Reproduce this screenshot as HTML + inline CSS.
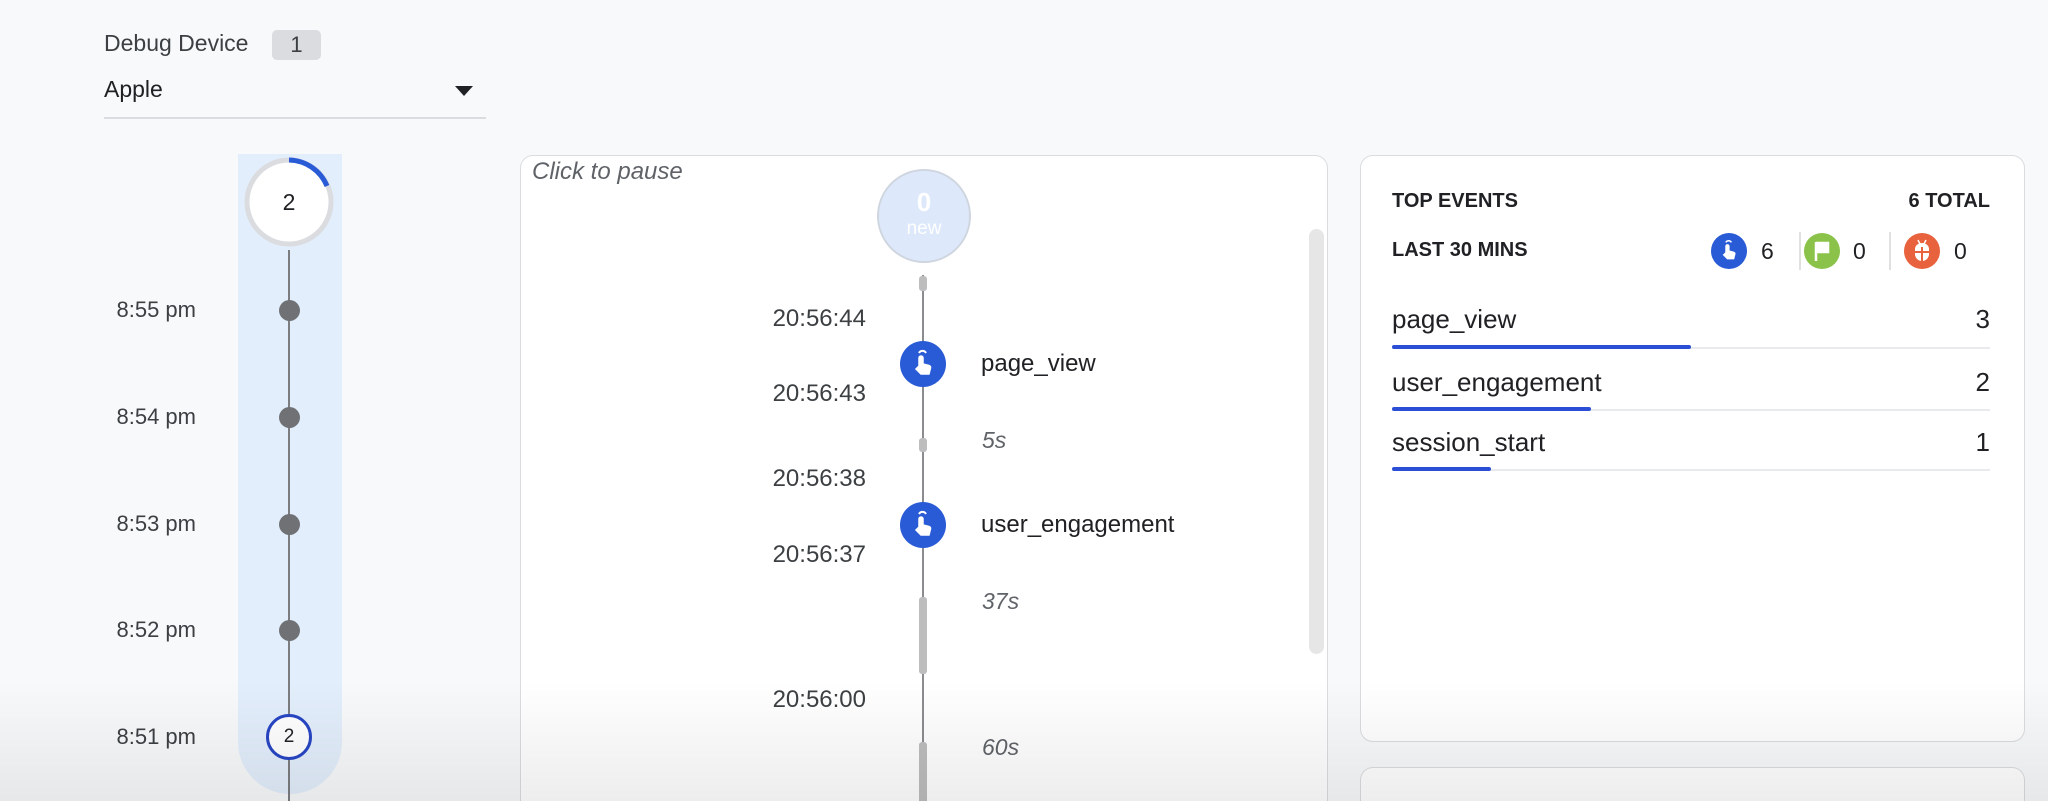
<!DOCTYPE html>
<html><head><meta charset="utf-8"><style>
*{margin:0;padding:0;box-sizing:border-box}
html,body{width:2048px;height:801px;overflow:hidden}
body{background:#f8f9fa;font-family:"Liberation Sans",Arial,sans-serif;color:#202124}
#w{position:relative;width:2048px;height:801px;overflow:hidden}
.a{position:absolute;white-space:nowrap}
.card{position:absolute;background:#fff;border:1.5px solid #dadce0;border-radius:13px}
.t{font-size:22px;color:#3c4043;text-align:right;width:120px}
.ts{font-size:24px;color:#3c4043;text-align:right;width:140px}
.it{font-size:23px;font-style:italic;color:#5f6368}
.ev{font-size:24px;color:#202124}
.dot{position:absolute;width:21px;height:21px;border-radius:50%;background:#6f7175}
.seg{position:absolute;width:8px;background:#bdbdbd;border-radius:3px;left:919px}
.row{position:absolute;left:1392px;width:598px;font-size:26px}
.row .n{position:absolute;right:0}
.row .bl{position:absolute;left:0;height:4px;background:#2a4fd6;border-radius:2px}
.row .gl{position:absolute;left:0;right:0;height:2px;background:#e8eaed}
</style></head><body><div id="w">
<div class="a" style="left:104px;top:30px;font-size:23px;color:#3c4043">Debug Device</div>
<div class="a" style="left:272px;top:30px;width:49px;height:30px;background:#dadce0;border-radius:5px;font-size:22px;text-align:center;line-height:30px;color:#3c4043">1</div>
<div class="a" style="left:104px;top:76px;font-size:23px;color:#202124">Apple</div>
<div class="a" style="left:455px;top:86px;width:0;height:0;border-left:9px solid transparent;border-right:9px solid transparent;border-top:10px solid #202124"></div>
<div class="a" style="left:104px;top:117px;width:382px;height:2px;background:#dadce0"></div>

<div class="a" style="left:238px;top:154px;width:104px;height:640px;background:#e3eefc;border-radius:0 0 52px 52px"></div>
<div class="a" style="left:288px;top:250px;width:2px;height:551px;background:#7b7d80"></div>
<svg class="a" style="left:243px;top:156px" width="92" height="92" viewBox="0 0 92 92">
<circle cx="46" cy="46" r="42" fill="#fff" stroke="#dadce0" stroke-width="5"/>
<path d="M46 4 A42 42 0 0 1 84 30" fill="none" stroke="#2a5bd7" stroke-width="5"/>
<text x="46" y="54" text-anchor="middle" font-family="Liberation Sans" font-size="23" fill="#202124">2</text></svg>
<div class="dot" style="left:279px;top:300px"></div>
<div class="dot" style="left:279px;top:407px"></div>
<div class="dot" style="left:279px;top:514px"></div>
<div class="dot" style="left:279px;top:620px"></div>
<div class="a t" style="left:76px;top:297px">8:55 pm</div>
<div class="a t" style="left:76px;top:404px">8:54 pm</div>
<div class="a t" style="left:76px;top:511px">8:53 pm</div>
<div class="a t" style="left:76px;top:617px">8:52 pm</div>
<div class="a t" style="left:76px;top:724px">8:51 pm</div>
<div class="a" style="left:266px;top:714px;width:46px;height:46px;border-radius:50%;background:#fff;border:3.5px solid #2846c4;text-align:center;line-height:39px;font-size:19px">2</div>

<div class="card" style="left:520px;top:155px;width:808px;height:646px;border-bottom:none;border-radius:13px 13px 0 0"></div>
<div class="a" style="left:532px;top:158px;font-size:24px;font-style:italic;color:#5f6368">Click to pause</div>
<div class="a" style="left:877px;top:169px;width:94px;height:94px;border-radius:50%;background:#dde9fb;border:2px solid #cfd6e0;text-align:center;color:#fff">
<div style="font-size:26px;font-weight:bold;margin-top:16px">0</div><div style="font-size:19px">new</div></div>
<div class="a" style="left:922px;top:275px;width:2px;height:526px;background:#8a8c8f"></div>
<div class="seg" style="top:276px;height:15px"></div>
<div class="seg" style="top:438px;height:14px"></div>
<div class="seg" style="top:597px;height:77px"></div>
<div class="seg" style="top:742px;height:59px;border-radius:3px 3px 0 0"></div>
<div class="a" style="left:1309px;top:229px;width:15px;height:425px;background:#e6e6e6;border-radius:8px"></div>
<div class="a ts" style="left:726px;top:305px">20:56:44</div>
<div class="a ts" style="left:726px;top:380px">20:56:43</div>
<div class="a ts" style="left:726px;top:465px">20:56:38</div>
<div class="a ts" style="left:726px;top:541px">20:56:37</div>
<div class="a ts" style="left:726px;top:686px">20:56:00</div>
<svg class="a" style="left:900px;top:341px" width="46" height="46" viewBox="0 0 46 46"><circle cx="23" cy="23" r="23" fill="#2a5bd7"/><path d="M19 12a4 4 0 0 1 7 0" fill="none" stroke="#fff" stroke-width="2"/><path d="M19 29V17a2 2 0 0 1 4 0v6l6 1.5a2 2 0 0 1 1.5 2.5l-1.5 6H21l-5-5 2-2z" fill="#fff" stroke="#fff" stroke-width="1.5"/></svg>
<svg class="a" style="left:900px;top:502px" width="46" height="46" viewBox="0 0 46 46"><circle cx="23" cy="23" r="23" fill="#2a5bd7"/><path d="M19 12a4 4 0 0 1 7 0" fill="none" stroke="#fff" stroke-width="2"/><path d="M19 29V17a2 2 0 0 1 4 0v6l6 1.5a2 2 0 0 1 1.5 2.5l-1.5 6H21l-5-5 2-2z" fill="#fff" stroke="#fff" stroke-width="1.5"/></svg>
<div class="a ev" style="left:981px;top:350px">page_view</div>
<div class="a ev" style="left:981px;top:511px">user_engagement</div>
<div class="a it" style="left:982px;top:427px">5s</div>
<div class="a it" style="left:982px;top:588px">37s</div>
<div class="a it" style="left:982px;top:734px">60s</div>

<div class="card" style="left:1360px;top:155px;width:665px;height:587px"></div>
<div class="card" style="left:1360px;top:767px;width:665px;height:34px;border-bottom:none;border-radius:13px 13px 0 0"></div>
<div class="a" style="left:1392px;top:190px;font-size:20px;font-weight:bold;color:#202124">TOP EVENTS</div>
<div class="a" style="left:1850px;top:190px;width:140px;text-align:right;font-size:20px;font-weight:bold">6 TOTAL</div>
<div class="a" style="left:1392px;top:239px;font-size:20px;font-weight:bold">LAST 30 MINS</div>
<svg class="a" style="left:1711px;top:233px" width="36" height="36" viewBox="0 0 46 46"><circle cx="23" cy="23" r="23" fill="#2a5bd7"/><path d="M19 12a4 4 0 0 1 7 0" fill="none" stroke="#fff" stroke-width="2"/><path d="M19 29V17a2 2 0 0 1 4 0v6l6 1.5a2 2 0 0 1 1.5 2.5l-1.5 6H21l-5-5 2-2z" fill="#fff" stroke="#fff" stroke-width="1.5"/></svg>
<div class="a" style="left:1761px;top:238px;font-size:23px">6</div>
<div class="a" style="left:1799px;top:232px;width:2px;height:38px;background:#e0e0e0"></div>
<svg class="a" style="left:1804px;top:233px" width="36" height="36" viewBox="0 0 36 36"><circle cx="18" cy="18" r="18" fill="#8bc34a"/><path d="M12 9v19M12 10h12v9H12" fill="#fff" stroke="#fff" stroke-width="2.5"/></svg>
<div class="a" style="left:1853px;top:238px;font-size:23px">0</div>
<div class="a" style="left:1889px;top:232px;width:2px;height:38px;background:#e0e0e0"></div>
<svg class="a" style="left:1904px;top:233px" width="36" height="36" viewBox="0 0 36 36"><circle cx="18" cy="18" r="18" fill="#e8623d"/><path d="M11 16a7 6 0 0 1 14 0v5a7 7 0 0 1-14 0z" fill="#fff"/><path d="M18 14v14M11 19h14" stroke="#e8623d" stroke-width="2"/><path d="M14 7l2 4M22 7l-2 4" stroke="#fff" stroke-width="1.5"/></svg>
<div class="a" style="left:1954px;top:238px;font-size:23px">0</div>

<div class="row" style="top:304px"><span>page_view</span><span class="n">3</span><div class="gl" style="top:43px"></div><div class="bl" style="top:41px;width:299px"></div></div>
<div class="row" style="top:367px"><span>user_engagement</span><span class="n">2</span><div class="gl" style="top:42px"></div><div class="bl" style="top:40px;width:199px"></div></div>
<div class="row" style="top:427px"><span>session_start</span><span class="n">1</span><div class="gl" style="top:42px"></div><div class="bl" style="top:40px;width:99px"></div></div>

<div class="a" style="left:0;top:680px;width:2048px;height:121px;background:linear-gradient(to bottom,rgba(0,0,0,0),rgba(0,0,0,0.07))"></div>
</div></body></html>
